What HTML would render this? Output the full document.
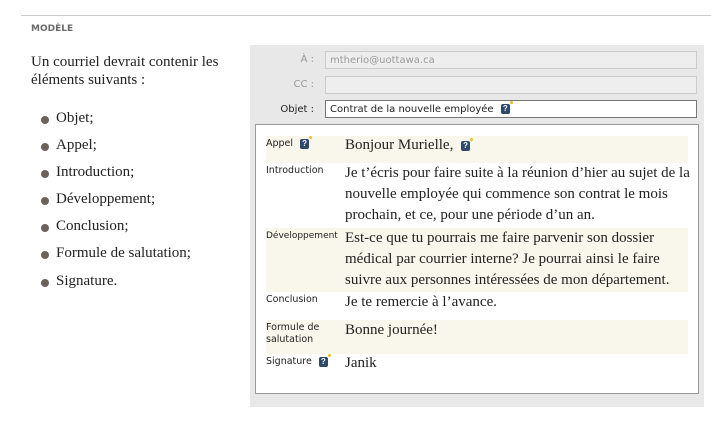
<!DOCTYPE html>
<html><head><meta charset="utf-8"><style>
body{margin:0;width:711px;height:424px;background:#fff;position:relative;overflow:hidden;font-family:"Liberation Serif",serif;color:#222}
.a{position:absolute}
.s{font-family:"DejaVu Sans","Liberation Sans",sans-serif}
.q{display:inline-block;width:9px;height:10px;background:#2d4a6b;border-radius:2px;color:#fff;font:bold 8px/10px "Liberation Sans",sans-serif;text-align:center;vertical-align:middle;position:relative;margin-left:4px}
.q:after{content:"";position:absolute;right:-3px;top:-3px;width:3px;height:3px;background:#f0c020;border-radius:50%}
.b{position:absolute;left:41px;width:8px;height:8px;border-radius:50%;background:#6b625a}
.li{position:absolute;left:56px;font-size:15px}
.lab{position:absolute;font-size:10px;color:#999;text-align:right;width:60px;left:254px}
.in{position:absolute;left:325px;width:372px;height:18px;border:1px solid #ccc;background:#eee;font-size:10px;color:#999;line-height:17px;padding-left:4px;box-sizing:border-box}
.row{position:absolute;left:266px;width:422px}
.rl{position:absolute;left:0;top:2px;font-size:9.5px;line-height:12px;color:#222}
.rc{position:absolute;left:79px;top:0;font-size:15px;line-height:21px;width:345px}
</style></head><body>
<div class="a" style="left:21px;top:15px;width:690px;height:1px;background:#ccc"></div>
<div class="a s" style="left:31px;top:24px;font-size:9px;font-weight:bold;color:#6b6b6b">MODÈLE</div>
<div class="a" style="left:31px;top:53px;font-size:15px;line-height:18px;width:200px">Un courriel devrait contenir les éléments suivants :</div>
<div class="b" style="top:116px"></div><div class="li" style="top:110px">Objet;</div>
<div class="b" style="top:143px"></div><div class="li" style="top:137px">Appel;</div>
<div class="b" style="top:170px"></div><div class="li" style="top:164px">Introduction;</div>
<div class="b" style="top:197px"></div><div class="li" style="top:191px">Développement;</div>
<div class="b" style="top:224px"></div><div class="li" style="top:218px">Conclusion;</div>
<div class="b" style="top:251px"></div><div class="li" style="top:245px">Formule de salutation;</div>
<div class="b" style="top:279px"></div><div class="li" style="top:273px">Signature.</div>
<div class="a" style="left:250px;top:45px;width:454px;height:362px;background:#e8e8e8"></div>
<div class="lab s" style="top:54px">À :</div><div class="in s" style="top:51px">mtherio@uottawa.ca</div>
<div class="lab s" style="top:79px">CC :</div><div class="in s" style="top:76px"></div>
<div class="lab s" style="top:104px;color:#222">Objet :</div><div class="in s" style="top:100px;background:#fff;border-color:#777;color:#222">Contrat de la nouvelle employée <span class="q">?</span></div>
<div class="a" style="left:255px;top:124px;width:442px;height:268px;background:#fff;border:1px solid #999"></div>
<div class="row" style="top:136px;height:27px;background:#f9f7ec"><div class="rl s">Appel <span class="q">?</span></div><div class="rc" style="top:-1px">Bonjour Murielle, <span class="q">?</span></div></div>
<div class="row" style="top:163px;height:63px"><div class="rl s">Introduction</div><div class="rc">Je t’écris pour faire suite à la réunion d’hier au sujet de la nouvelle employée qui commence son contrat le mois prochain, et ce, pour une période d’un an.</div></div>
<div class="row" style="top:228px;height:64px;background:#f9f7ec"><div class="rl s" style="font-size:9px">Développement</div><div class="rc">Est-ce que tu pourrais me faire parvenir son dossier médical par courrier interne? Je pourrai ainsi le faire suivre aux personnes intéressées de mon département.</div></div>
<div class="row" style="top:292px;height:28px"><div class="rl s">Conclusion</div><div class="rc">Je te remercie à l’avance.</div></div>
<div class="row" style="top:320px;height:34px;background:#f9f7ec"><div class="rl s">Formule de<br>salutation</div><div class="rc">Bonne journée!</div></div>
<div class="row" style="top:354px;height:28px"><div class="rl s">Signature <span class="q">?</span></div><div class="rc" style="top:-1px">Janik</div></div>
</body></html>
